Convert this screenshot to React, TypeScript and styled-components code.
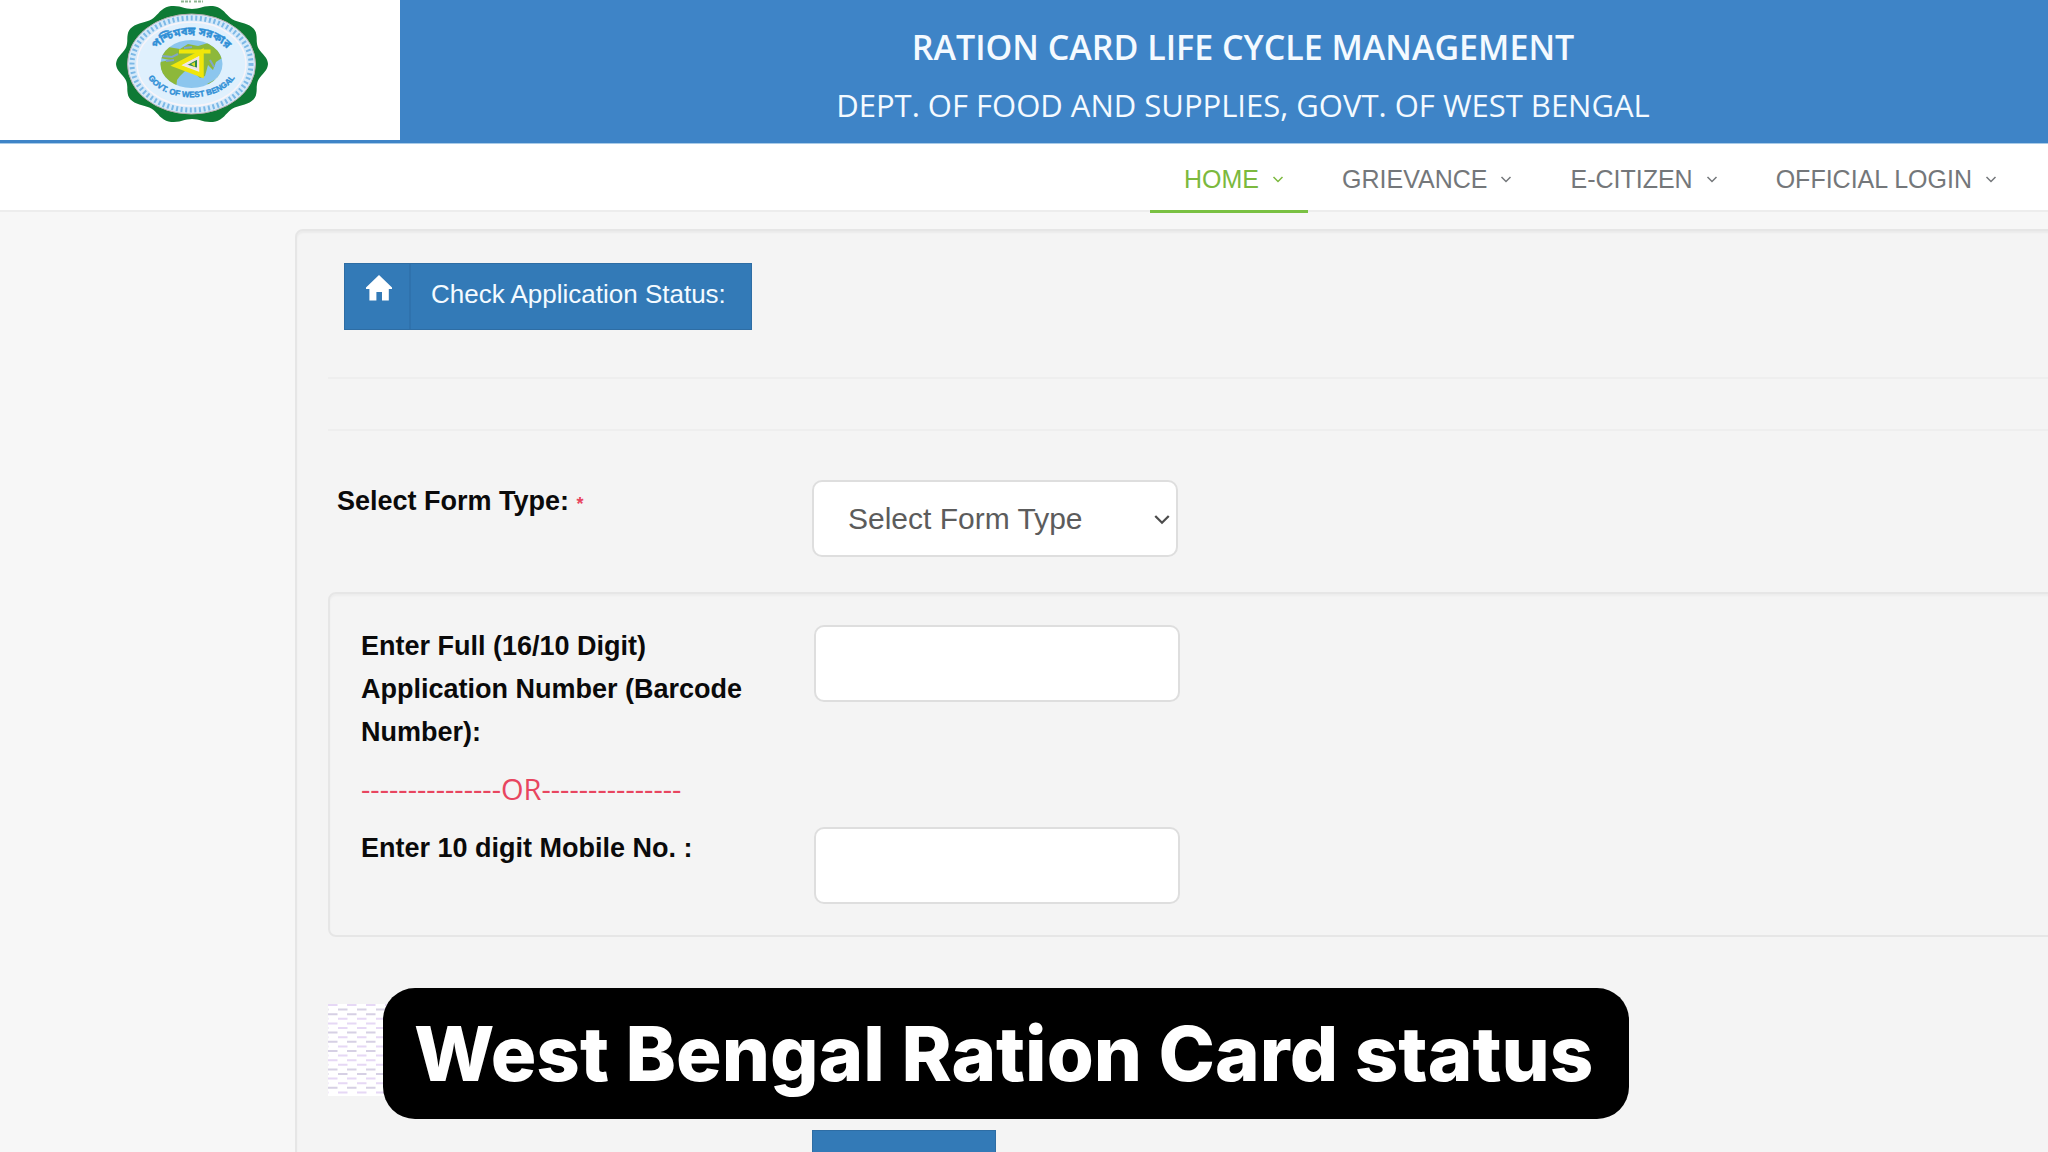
import React from "react";
import styled, { createGlobalStyle, css } from "styled-components";

const sans = '"Liberation Sans", Arial, sans-serif';
const openSans = '"Open Sans", "Noto Sans", sans-serif';

const GlobalStyle = createGlobalStyle`
  *, *::before, *::after { box-sizing: border-box; }
  body { margin: 0; background: #f7f7f7; font-family: ${sans}; color: #0a0a0a; }
`;

const Page = styled.div`
  position: relative;
  height: 100vh;
  overflow: hidden;
`;

const Header = styled.header`
  display: flex;
  height: 144px;
  background: #3e84c7;
  border-bottom: 1px solid #a9cbe8;
`;

const LogoCell = styled.a`
  flex: 0 0 400px;
  height: 140px;
  padding-right: 16px;
  background: #fff;
  display: flex;
  justify-content: center;
`;

const Titles = styled.div`
  flex: 1;
  padding: 18px 0 0 38px;
  text-align: center;
  color: #f4faff;
  font-family: ${openSans};
`;

const Title = styled.h1`
  margin: 0;
  font-size: 34px;
  font-weight: 600;
  line-height: 58px;
`;

const Subtitle = styled.p`
  margin: 0;
  font-size: 31px;
  line-height: 58px;
`;

const Nav = styled.nav`
  display: flex;
  justify-content: flex-end;
  height: 68px;
  padding-right: 27px;
  background: #fff;
  border-bottom: 2px solid #ededed;
`;

const NavItem = styled.a<{ $active?: boolean }>`
  display: flex;
  align-items: center;
  gap: 13px;
  height: 69px;
  padding: 4px 24px 0 34px;
  font-size: 25px;
  text-decoration: none;
  color: #74777a;
  border-bottom: 3px solid transparent;
  ${(p) =>
    p.$active &&
    css`
      color: #7cb93e;
      border-color: #7ac143;
    `}
`;

const Panel = styled.main`
  margin: 17px -40px 0 295px;
  padding: 32px 31px 60px;
  border: 2px solid #e6e6e6;
  border-radius: 8px;
  background: #f4f4f4;
  box-shadow: inset 0 2px 2px rgba(0, 0, 0, 0.04);
`;

const Crumb = styled.a`
  display: flex;
  width: fit-content;
  height: 67px;
  margin-left: 16px;
  background: #337ab7;
  border: 1px solid #2e6da4;
  color: #f4faff;
  font-size: 26px;
  line-height: 60px;
  text-decoration: none;
`;

const CrumbIcon = styled.span`
  display: flex;
  justify-content: center;
  width: 66px;
  padding-top: 11px;
  padding-left: 4px;
  border-right: 2px solid #2f72ad;
`;

const CrumbText = styled.span`
  padding: 0 25px 0 20px;
`;

const Rules = styled.div`
  display: grid;
  gap: 50px;
  margin: 47px 0 49px;
`;

const Rule = styled.hr`
  width: 100%;
  margin: 0;
  border: 0;
  border-top: 2px solid #eeeeee;
`;

const Label = styled.label`
  font-size: 27px;
  font-weight: 700;
  line-height: 43px;
`;

const Required = styled.span`
  color: #e8455f;
  font-size: 18px;
`;

const FormTypeRow = styled.div`
  display: grid;
  grid-template-columns: 475px 366px;
  padding-left: 9px;
`;

const fieldBox = css`
  width: 100%;
  height: 77px;
  border: 2px solid #dedede;
  border-radius: 10px;
  background: #fff;
  color: #5c5c5c;
  font-family: ${sans};
  font-size: 30px;
`;

const SelectWrap = styled.div`
  display: grid;
  align-items: center;
  color: #4c4c4c;
  > * { grid-area: 1 / 1; }
  > svg { justify-self: end; margin-right: 7px; pointer-events: none; }
`;

const Select = styled.select`
  ${fieldBox}
  appearance: none;
  padding: 0 34px;
`;

const TextInput = styled.input`
  ${fieldBox}
  padding: 0 32px;
`;

const SearchBox = styled.fieldset`
  display: grid;
  grid-template-columns: 453px 366px;
  row-gap: 15px;
  margin: 35px 0 0;
  padding: 31px;
  min-width: 0;
  border: 2px solid #e6e6e6;
  border-radius: 8px;
  box-shadow: inset 0 2px 2px rgba(0, 0, 0, 0.03);

  ${Label} { padding-right: 60px; }
`;

const Or = styled.p`
  grid-column: 1 / -1;
  margin: 0;
  padding-bottom: 4px;
  color: #e8455f;
  font-family: ${openSans};
  font-size: 29px;
  line-height: 39px;
`;

const Captcha = styled.div`
  width: 240px;
  height: 92px;
  margin: 67px 0 34px;
`;

const Submit = styled.button`
  display: block;
  width: 184px;
  height: 67px;
  margin-left: 484px;
  border: 1px solid #2e6da4;
  background: #337ab7;
`;

const Banner = styled.div`
  position: absolute;
  left: 383px;
  bottom: 33px;
  padding: 0 36px 0 31px;
  border-radius: 32px;
  background: #000;
  color: #fff;
  font-family: Inter, sans-serif;
  font-size: 76px;
  font-weight: 800;
  line-height: 131px;
  white-space: nowrap;
`;

const Chevron = ({ size, weight }: { size: number; weight: number }) => (
  <svg width={size} height={size} viewBox="0 0 12 12" fill="none" stroke="currentColor" strokeWidth={weight} aria-hidden>
    <path d="M1.5 4 6 8.5 10.5 4" />
  </svg>
);

const HomeIcon = () => (
  <svg width="26" height="26" viewBox="0 0 26 26" fill="#fff" aria-hidden>
    <path d="M13 0 26 12.6V14h-3.2v11.5H16V17h-5.6v8.5H3.4V14H0v-1.4Z" />
  </svg>
);

const scallop = Array.from({ length: 181 }, (_, i) => {
  const t = (i * Math.PI) / 90;
  const r = 0.955 + 0.045 * Math.cos(10 * t);
  return `${(80 + 76 * r * Math.cos(t)).toFixed(1)},${(64 + 60.5 * r * Math.sin(t)).toFixed(1)}`;
}).join(" ");

const Emblem = () => (
  <svg width="160" height="128" viewBox="0 0 160 128" role="img" aria-label="Government of West Bengal">
    <defs>
      <path id="arcTop" d="M40 56A41 29 0 0 1 119 56" />
      <path id="arcBottom" d="M33 70A47 32 0 0 0 126 70" />
      <clipPath id="globe">
        <ellipse cx="79.5" cy="64" rx="31" ry="24" />
      </clipPath>
    </defs>
    <path d="M69 1.5h10M82 1.5h9" stroke="#8fb592" strokeWidth="2" strokeDasharray="3 1" />
    <polygon points={scallop} fill="#0e7a35" />
    <ellipse cx="79.5" cy="64" rx="64" ry="50" fill="#d6eafa" stroke="#b9aeb4" />
    <ellipse cx="79.5" cy="64" rx="59.5" ry="46" fill="none" stroke="#7cb8e6" strokeWidth="5" strokeDasharray="2 2.6" />
    <ellipse cx="79.5" cy="64" rx="54.5" ry="42" fill="#dff0fd" stroke="#f8f4f8" strokeWidth="1.5" />
    <g clipPath="url(#globe)">
      <rect x="48" y="39" width="64" height="50" fill="#8cc6ee" />
      <path d="M48 50 56 47 68 49 76 44 86 46 96 43 106 50 110 58 104 62 101 70 96 65 93 76 88 78 80 71 74 70 68 76 65 80 64 90H48V62l10-2-10-2Z" fill="#8db83a" />
      <path d="M95 84 104 79 108 74 106 88Z" fill="#8db83a" />
      <path d="M50 56 60 57 66 54M54 61 62 60M98 60 102 67M72 48 80 47" stroke="#7fa6c9" strokeWidth="2" fill="none" />
    </g>
    <path d="M67 51.5H98.5" stroke="#f0e60a" strokeWidth="4" />
    <path d="M87 53.5 89.5 52V75L64 65.5Z" fill="#eee" stroke="#f0e60a" strokeWidth="4.5" />
    <path d="M86 58V69L73 65Z" fill="#2c8a4b" stroke="#efe3e6" strokeWidth="2" />
    <path d="M79 64 83 62V67Z" fill="#d9dc30" />
    <g fill="#2f8fd6" stroke="#2f8fd6" strokeWidth="0.4" fontWeight="700" textAnchor="middle">
      <text fontSize="11" fontFamily='"Noto Sans Bengali", "Noto Sans", sans-serif'>
        <textPath href="#arcTop" startOffset="50%">পশ্চিমবঙ্গ সরকার</textPath>
      </text>
      <text fontSize="8" fontFamily={sans}>
        <textPath href="#arcBottom" startOffset="50%">GOVT. OF WEST BENGAL</textPath>
      </text>
    </g>
  </svg>
);

const noiseRows = Array.from({ length: 20 }, (_, i) => i);

const CaptchaPattern = () => (
  <svg width="240" height="92" viewBox="0 0 240 92" role="img" aria-label="Captcha">
    <rect width="240" height="92" fill="#fff" />
    {noiseRows.map((i) => (
      <path
        key={i}
        d={`M${i % 2 ? -9 : 0} ${1 + i * 4.6}H240`}
        stroke={i % 4 === 2 || i % 7 === 1 ? "#d6d0e4" : "#e6d8f5"}
        strokeWidth="2"
        strokeDasharray="9.5 9.5"
      />
    ))}
  </svg>
);

const navItems = ["HOME", "GRIEVANCE", "E-CITIZEN", "OFFICIAL LOGIN"];
const dashes = "-".repeat(15);

export default function App() {
  return (
    <Page>
      <GlobalStyle />
      <Header>
        <LogoCell href="#">
          <Emblem />
        </LogoCell>
        <Titles>
          <Title>RATION CARD LIFE CYCLE MANAGEMENT</Title>
          <Subtitle>DEPT. OF FOOD AND SUPPLIES, GOVT. OF WEST BENGAL</Subtitle>
        </Titles>
      </Header>
      <Nav>
        {navItems.map((name, i) => (
          <NavItem key={name} href="#" $active={i === 0}>
            {name}
            <Chevron size={12} weight={1.5} />
          </NavItem>
        ))}
      </Nav>
      <Panel>
        <Crumb href="#">
          <CrumbIcon>
            <HomeIcon />
          </CrumbIcon>
          <CrumbText>Check Application Status:</CrumbText>
        </Crumb>
        <Rules>
          <Rule />
          <Rule />
        </Rules>
        <FormTypeRow>
          <Label htmlFor="formType">
            Select Form Type: <Required>*</Required>
          </Label>
          <SelectWrap>
            <Select id="formType">
              <option>Select Form Type</option>
            </Select>
            <Chevron size={18} weight={1.5} />
          </SelectWrap>
        </FormTypeRow>
        <SearchBox>
          <Label htmlFor="appNo">Enter Full (16/10 Digit) Application Number (Barcode Number):</Label>
          <TextInput id="appNo" type="text" />
          <Or>
            {dashes}OR{dashes}
          </Or>
          <Label htmlFor="mobile">Enter 10 digit Mobile No. :</Label>
          <TextInput id="mobile" type="tel" />
        </SearchBox>
        <Captcha>
          <CaptchaPattern />
        </Captcha>
        <Submit type="submit" aria-label="Search" />
      </Panel>
      <Banner>West Bengal Ration Card status</Banner>
    </Page>
  );
}
